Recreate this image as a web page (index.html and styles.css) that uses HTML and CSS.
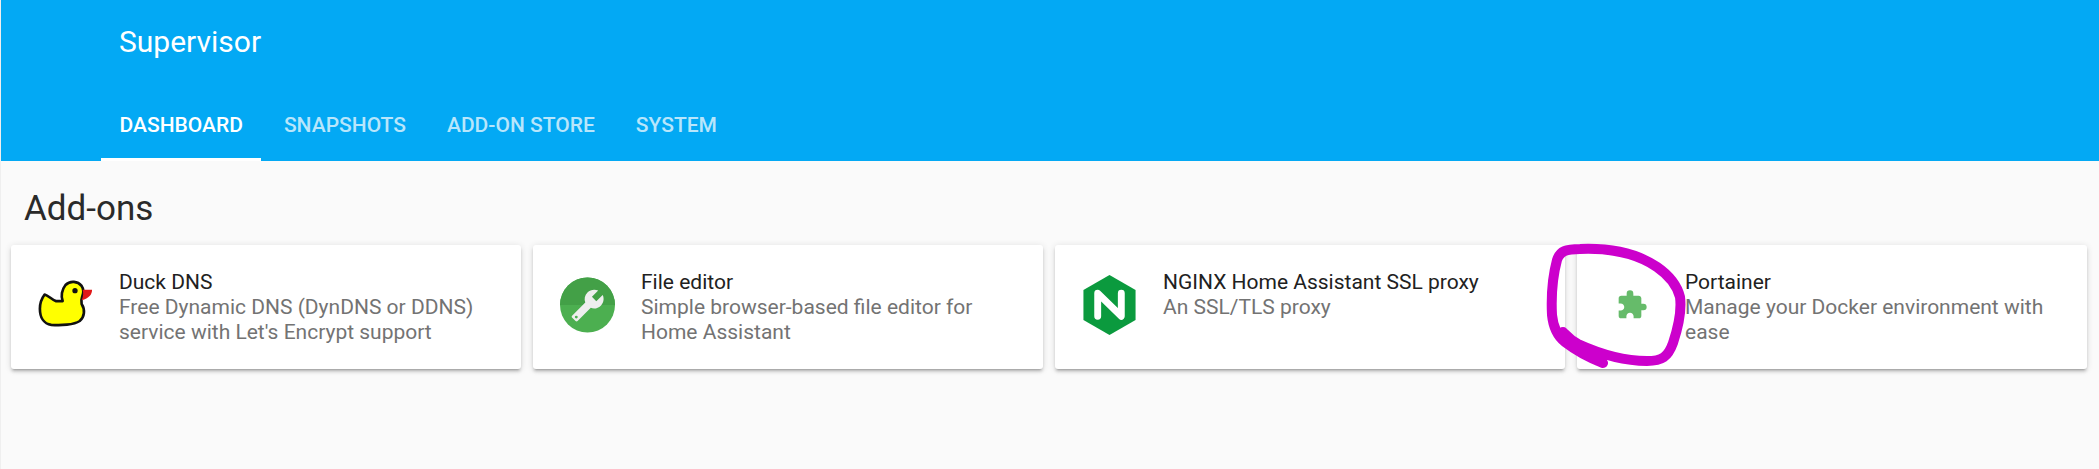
FILE: index.html
```html
<!DOCTYPE html>
<html lang="en">
<head>
  <meta charset="UTF-8">
  <title>Supervisor</title>
  <link rel="stylesheet" href="styles.css">
</head>
<body>
  <div class="page">
    <header class="header">
      <div class="toolbar">Supervisor</div>
      <nav class="tabs">
        <a class="tab active">DASHBOARD</a>
        <a class="tab">SNAPSHOTS</a>
        <a class="tab">ADD-ON STORE</a>
        <a class="tab">SYSTEM</a>
      </nav>
    </header>

    <main class="content">
      <h1>Add-ons</h1>
      <div class="cards">
        <div class="card">
          <div class="icon">
            <svg class="duck" viewBox="16 12 58 50">
              <path d="M23 28C27 29 31 34 35 35L42 35C40 30 41 23 45 18C50 13 58 14 62 19C64 22 64 26 63 29C62 32 61 34 62 38C66 44 65 52 60 56C54 60 40 61 30 60C22 59 18 52 18 43C18 37 20 32 23 28Z" fill="#ffff00" stroke="#111" stroke-width="2.800" stroke-linejoin="round"/>
              <path d="M63 23L73 23C73 28 70 32 62 34C64 30 64 26 63 23Z" fill="#e01818"/>
              <circle cx="55" cy="24" r="2.800" fill="#111"/>
            </svg>
          </div>
          <div class="text">
            <div class="title">Duck DNS</div>
            <div class="desc">Free Dynamic DNS (DynDNS or DDNS) service with Let's Encrypt support</div>
          </div>
        </div>

        <div class="card">
          <div class="icon">
            <svg class="full" viewBox="0 0 55 55">
              <circle cx="27.500" cy="27.500" r="27.500" fill="#4caf50"/>
              <path d="M0 27.500A27.500 27.500 0 0 1 55 27.500Z" fill="#43a047"/>
              <g transform="translate(45 10.600) scale(1.450) scale(-1 1)">
                <path d="M22.700 19L13.600 9.900C14.500 7.600 14 4.900 12.100 3C10.100 1 7.100 .6 4.700 1.700L9 6L6 9L1.600 4.700C.4 7.100 .9 10.100 2.900 12.100C4.800 14 7.500 14.500 9.800 13.600L18.900 22.700C19.300 23.100 19.900 23.100 20.300 22.700L22.600 20.400C23.100 20 23.100 19.300 22.700 19Z" fill="#eeeeee"/>
                <circle cx="19.800" cy="20" r="1" fill="#4caf50"/>
              </g>
            </svg>
          </div>
          <div class="text">
            <div class="title">File editor</div>
            <div class="desc">Simple browser-based file editor for Home Assistant</div>
          </div>
        </div>

        <div class="card">
          <div class="icon">
            <svg class="full" viewBox="0 0 53 61">
              <path d="M26.500 0L53 15.200V45.800L26.500 61L0 45.800V15.200Z" fill="#0b9a3e"/>
              <path d="M14.500 42V18.500L38.500 42V18.500" fill="none" stroke="#ffffff" stroke-width="7" stroke-linecap="round" stroke-linejoin="round"/>
            </svg>
          </div>
          <div class="text">
            <div class="title">NGINX Home Assistant SSL proxy</div>
            <div class="desc">An SSL/TLS proxy</div>
          </div>
        </div>

        <div class="card">
          <div class="icon">
            <svg class="puzzle" viewBox="0 0 24 24">
              <path d="M20.500 11H19V7C19 5.890 18.100 5 17 5H13V3.500A2.500 2.500 0 0 0 10.500 1A2.500 2.500 0 0 0 8 3.500V5H4A2 2 0 0 0 2 7V10.800H3.500C5 10.800 6.200 12 6.200 13.500C6.200 15 5 16.200 3.500 16.200H2V20A2 2 0 0 0 4 22H7.800V20.500C7.800 19 9 17.800 10.500 17.800C12 17.800 13.200 19 13.200 20.500V22H17A2 2 0 0 0 19 20V16H20.500A2.500 2.500 0 0 0 23 13.500A2.500 2.500 0 0 0 20.500 11Z" fill="#66bb6a"/>
            </svg>
          </div>
          <div class="text">
            <div class="title">Portainer</div>
            <div class="desc">Manage your Docker environment with ease</div>
          </div>
        </div>
      </div>
    </main>

    <!-- hand drawn circle on top of the screenshot -->
    <svg class="scribble" viewBox="0 0 2099 469">
      <path d="M1603 363C1590 358 1578 352 1565 342C1556 335 1553 325 1552 315C1551 295 1553 275 1557 260C1560 251 1566 249 1580 249C1605 248 1635 252 1657 267C1670 276 1677 285 1680 297C1682 312 1678 328 1673 343C1668 357 1662 361 1647 361C1625 361 1600 354 1578 344C1570 340 1566 335 1563 332" fill="none" stroke="#cc00cc" stroke-width="10" stroke-linecap="round" stroke-linejoin="round"/>
    </svg>
  </div>
</body>
</html>
```

FILE: styles.css
```css
html, body {
  margin: 0;
  height: 100%;
}
body {
  font-family: Roboto, "Liberation Sans", sans-serif;
  background: #fafafa;
  overflow: hidden;
}
.page {
  position: relative;
  height: 469px;
  border-left: 1px solid #efefef;
  box-sizing: border-box;
}
.header {
  height: 161px;
  background: #03a9f4;
  color: #fff;
  display: flex;
  flex-direction: column;
  justify-content: space-between;
}
.toolbar {
  padding: 26px 0 0 118px;
  font-size: 30px;
  line-height: 32px;
}
.tabs {
  display: flex;
  gap: 4px;
  padding-left: 100px;
}
.tab {
  height: 64px;
  box-sizing: border-box;
  padding: 0 18.5px 5px;
  display: flex;
  align-items: center;
  font-size: 21px;
  font-weight: 500;
  color: rgba(255,255,255,0.72);
  border-bottom: 3px solid transparent;
}
.tab.active {
  color: #fff;
  border-bottom-color: #fff;
}
.content {
  padding: 0 11px 0 10px;
}
h1 {
  margin: 0;
  padding: 23px 0 0 13px;
  height: 84px;
  box-sizing: border-box;
  font-size: 35px;
  line-height: 50px;
  font-weight: 400;
  color: #2a2a2a;
}
.cards {
  display: grid;
  grid-template-columns: repeat(4, 510px);
  gap: 12px;
}
.card {
  display: flex;
  background: #fff;
  border-radius: 3px;
  padding: 25px 20px 24px 27px;
  box-shadow: 0 3px 3px rgba(0,0,0,0.14), 0 1px 7px rgba(0,0,0,0.12), 0 3px 2px -2px rgba(0,0,0,0.2);
}
.icon {
  flex: none;
  width: 55px;
  height: 70px;
  margin-right: 26px;
  display: flex;
  align-items: center;
  justify-content: center;
}
.duck {
  width: 56px;
  height: 48px;
  margin-bottom: 5px;
}
.full {
  width: 55px;
  height: 60px;
}
.puzzle {
  width: 32px;
  height: 32px;
}
.text {
  font-size: 21px;
  line-height: 25px;
}
.title {
  color: #212121;
}
.desc {
  color: #737373;
}
.scribble {
  position: absolute;
  top: 0;
  left: -1px;
  width: 2099px;
  height: 469px;
  pointer-events: none;
}
```
